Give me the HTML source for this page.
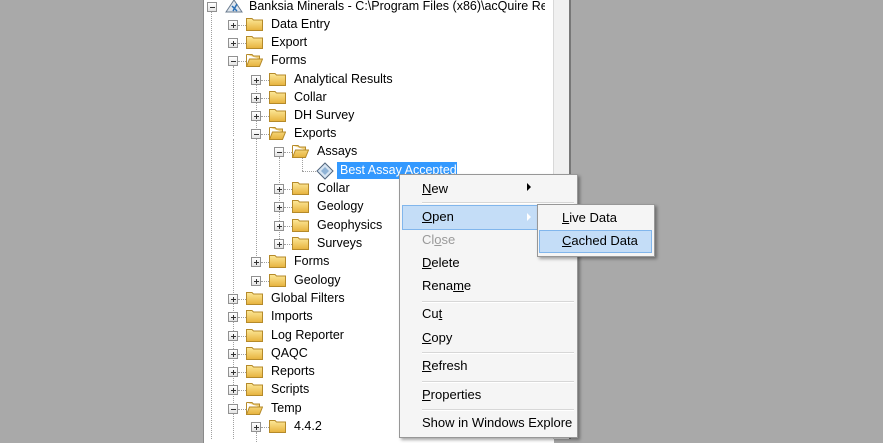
<!DOCTYPE html>
<html><head><meta charset="utf-8"><style>
body{margin:0;width:883px;height:439px;background:#a9a9a9;position:relative;overflow:hidden;font-family:"Liberation Sans",sans-serif;font-size:12.5px;color:#000}
#panel{position:absolute;left:203px;top:-2px;width:350px;height:445px;background:#fff;border-left:1px solid #8a8a8a}
#sb{position:absolute;left:553px;top:0;width:15px;height:439px;background:#f0f0f0;border-left:1px solid #d8d8d8;border-right:2px solid #777}
.v{position:absolute;border-left:1px dotted #a0a0a0;width:0}
.h{position:absolute;border-top:1px dotted #a0a0a0;height:0}
.box{position:absolute;width:8px;height:8px;border:1px solid #919191;background:linear-gradient(#fff,#e4e4e4);font-size:0}
.box:before{content:"";position:absolute;left:2px;top:4px;width:5px;height:1px;background:#333}
.box.p:after{content:"";position:absolute;left:4px;top:2px;width:1px;height:5px;background:#333}
.f{position:absolute;width:17px;height:14px;margin-top:-1px}
.t{position:absolute;white-space:nowrap;line-height:16px}
#menu{position:absolute;left:399px;top:174px;width:177px;height:262px;background:#f5f5f5;border:1px solid #979797;box-shadow:2px 2px 3px rgba(0,0,0,.35)}
.mi{position:absolute;left:22px;white-space:nowrap;font-size:13px}
.sep{position:absolute;left:22px;right:3px;height:1px;background:#d7d7d7;border-bottom:1px solid #fff}
.hl{position:absolute;background:#c4ddf7;border:1px solid #81b6ec}
#sub{position:absolute;left:537px;top:204px;width:116px;height:51px;background:#f5f5f5;border:1px solid #979797;box-shadow:2px 2px 3px rgba(0,0,0,.35)}
u{text-decoration:underline}
</style></head><body>
<div id="panel"></div>
<div id="sb"></div>
<svg width="0" height="0" style="position:absolute"><defs>
<linearGradient id="g" x1="0" y1="0" x2="0" y2="1"><stop offset="0" stop-color="#fde99a"/><stop offset="1" stop-color="#e6b23c"/></linearGradient>
<symbol id="fc" viewBox="0 0 17 14"><path d="M0.5 1.5h5.5l1.5 1.5h9v10.5h-16z" fill="url(#g)" stroke="#b58a2a"/></symbol>
<symbol id="fo" viewBox="0 0 17 14"><path d="M0.5 1.5h5.5l1.5 1.5h6v3" fill="#f3d27a" stroke="#b58a2a"/><path d="M0.5 13.5v-12M0.5 13.5l3-7.5h13l-3 7.5z" fill="url(#g)" stroke="#b58a2a"/></symbol>
</defs></svg>
<div class="v" style="left:211px;top:12px;height:427px"></div>
<div class="v" style="left:233px;top:66px;height:70px"></div>
<div class="v" style="left:233px;top:139px;height:300px"></div>
<div class="v" style="left:256px;top:84px;height:182px"></div>
<div class="v" style="left:256px;top:432px;height:10px"></div>
<div class="v" style="left:279px;top:157px;height:90px"></div>
<div class="v" style="left:302px;top:157px;height:14px"></div>
<div class="box" style="left:207px;top:2px"></div>
<svg style="position:absolute;left:224px;top:-2px" width="20" height="16"><path d="M2 14l8-12 8 12z" fill="#dfe6ee" stroke="#6b7c8f"/><path d="M8 8l5 5M13 6l-4 7" stroke="#2a6fb5" stroke-width="1.5"/></svg>
<div class="t" style="left:249px;top:-2px;width:296px;overflow:hidden">Banksia Minerals - C:\Program Files (x86)\acQuire Refe</div>

<div class="h" style="left:238px;top:25px;width:8px"></div><div class="box p" style="left:228px;top:20px"></div><svg class="f" style="left:246px;top:18px"><use href="#fc"/></svg><div class="t" style="left:271px;top:16px">Data Entry</div>
<div class="h" style="left:238px;top:43px;width:8px"></div><div class="box p" style="left:228px;top:38px"></div><svg class="f" style="left:246px;top:36px"><use href="#fc"/></svg><div class="t" style="left:271px;top:34px">Export</div>
<div class="h" style="left:238px;top:61px;width:8px"></div><div class="box" style="left:228px;top:56px"></div><svg class="f" style="left:246px;top:54px"><use href="#fo"/></svg><div class="t" style="left:271px;top:52px">Forms</div>
<div class="h" style="left:261px;top:80px;width:8px"></div><div class="box p" style="left:251px;top:75px"></div><svg class="f" style="left:269px;top:73px"><use href="#fc"/></svg><div class="t" style="left:294px;top:71px">Analytical Results</div>
<div class="h" style="left:261px;top:98px;width:8px"></div><div class="box p" style="left:251px;top:93px"></div><svg class="f" style="left:269px;top:91px"><use href="#fc"/></svg><div class="t" style="left:294px;top:89px">Collar</div>
<div class="h" style="left:261px;top:116px;width:8px"></div><div class="box p" style="left:251px;top:111px"></div><svg class="f" style="left:269px;top:109px"><use href="#fc"/></svg><div class="t" style="left:294px;top:107px">DH Survey</div>
<div class="h" style="left:261px;top:134px;width:8px"></div><div class="box" style="left:251px;top:129px"></div><svg class="f" style="left:269px;top:127px"><use href="#fo"/></svg><div class="t" style="left:294px;top:125px">Exports</div>
<div class="h" style="left:284px;top:152px;width:8px"></div><div class="box" style="left:274px;top:147px"></div><svg class="f" style="left:292px;top:145px"><use href="#fo"/></svg><div class="t" style="left:317px;top:143px">Assays</div>
<div class="h" style="left:302px;top:171px;width:14px"></div>
<svg style="position:absolute;left:316px;top:162px" width="18" height="18"><path d="M9 1l8 8-8 8-8-8z" fill="#d6e4f2" stroke="#52667d"/><path d="M5 9l4-4 4 4-4 4z" fill="#8fb3d6"/></svg>
<div style="position:absolute;left:337px;top:162px;width:120px;height:17px;background:#3399ff"></div>
<div class="t" style="left:340px;top:162px;color:#fff">Best Assay Accepted</div>
<div class="h" style="left:284px;top:189px;width:8px"></div><div class="box p" style="left:274px;top:184px"></div><svg class="f" style="left:292px;top:182px"><use href="#fc"/></svg><div class="t" style="left:317px;top:180px">Collar</div>
<div class="h" style="left:284px;top:207px;width:8px"></div><div class="box p" style="left:274px;top:202px"></div><svg class="f" style="left:292px;top:200px"><use href="#fc"/></svg><div class="t" style="left:317px;top:198px">Geology</div>
<div class="h" style="left:284px;top:226px;width:8px"></div><div class="box p" style="left:274px;top:221px"></div><svg class="f" style="left:292px;top:219px"><use href="#fc"/></svg><div class="t" style="left:317px;top:217px">Geophysics</div>
<div class="h" style="left:284px;top:244px;width:8px"></div><div class="box p" style="left:274px;top:239px"></div><svg class="f" style="left:292px;top:237px"><use href="#fc"/></svg><div class="t" style="left:317px;top:235px">Surveys</div>
<div class="h" style="left:261px;top:262px;width:8px"></div><div class="box p" style="left:251px;top:257px"></div><svg class="f" style="left:269px;top:255px"><use href="#fc"/></svg><div class="t" style="left:294px;top:253px">Forms</div>
<div class="h" style="left:261px;top:281px;width:8px"></div><div class="box p" style="left:251px;top:276px"></div><svg class="f" style="left:269px;top:274px"><use href="#fc"/></svg><div class="t" style="left:294px;top:272px">Geology</div>
<div class="h" style="left:238px;top:299px;width:8px"></div><div class="box p" style="left:228px;top:294px"></div><svg class="f" style="left:246px;top:292px"><use href="#fc"/></svg><div class="t" style="left:271px;top:290px">Global Filters</div>
<div class="h" style="left:238px;top:317px;width:8px"></div><div class="box p" style="left:228px;top:312px"></div><svg class="f" style="left:246px;top:310px"><use href="#fc"/></svg><div class="t" style="left:271px;top:308px">Imports</div>
<div class="h" style="left:238px;top:336px;width:8px"></div><div class="box p" style="left:228px;top:331px"></div><svg class="f" style="left:246px;top:329px"><use href="#fc"/></svg><div class="t" style="left:271px;top:327px">Log Reporter</div>
<div class="h" style="left:238px;top:354px;width:8px"></div><div class="box p" style="left:228px;top:349px"></div><svg class="f" style="left:246px;top:347px"><use href="#fc"/></svg><div class="t" style="left:271px;top:345px">QAQC</div>
<div class="h" style="left:238px;top:372px;width:8px"></div><div class="box p" style="left:228px;top:367px"></div><svg class="f" style="left:246px;top:365px"><use href="#fc"/></svg><div class="t" style="left:271px;top:363px">Reports</div>
<div class="h" style="left:238px;top:390px;width:8px"></div><div class="box p" style="left:228px;top:385px"></div><svg class="f" style="left:246px;top:383px"><use href="#fc"/></svg><div class="t" style="left:271px;top:381px">Scripts</div>
<div class="h" style="left:238px;top:409px;width:8px"></div><div class="box" style="left:228px;top:404px"></div><svg class="f" style="left:246px;top:402px"><use href="#fo"/></svg><div class="t" style="left:271px;top:400px">Temp</div>
<div class="h" style="left:261px;top:427px;width:8px"></div><div class="box p" style="left:251px;top:422px"></div><svg class="f" style="left:269px;top:420px"><use href="#fc"/></svg><div class="t" style="left:294px;top:418px">4.4.2</div>

<div id="menu">
 <div class="hl" style="left:2px;top:30px;width:137px;height:23px"></div>
 <div class="mi" style="top:6px"><u>N</u>ew</div>
 <div style="position:absolute;left:127px;top:8px;width:0;height:0;border-left:4px solid #000;border-top:4px solid transparent;border-bottom:4px solid transparent"></div>
 <div class="sep" style="top:27px"></div>
 <div class="mi" style="top:34px"><u>O</u>pen</div>
 <div style="position:absolute;left:127px;top:38px;width:0;height:0;border-left:4px solid #fff;border-top:4px solid transparent;border-bottom:4px solid transparent"></div>
 <div class="mi" style="top:57px;color:#9a9a9a">Cl<u>o</u>se</div>
 <div class="mi" style="top:80px"><u>D</u>elete</div>
 <div class="mi" style="top:103px">Rena<u>m</u>e</div>
 <div class="sep" style="top:126px"></div>
 <div class="mi" style="top:131px">Cu<u>t</u></div>
 <div class="mi" style="top:155px"><u>C</u>opy</div>
 <div class="sep" style="top:177px"></div>
 <div class="mi" style="top:183px"><u>R</u>efresh</div>
 <div class="sep" style="top:206px"></div>
 <div class="mi" style="top:212px"><u>P</u>roperties</div>
 <div class="sep" style="top:234px"></div>
 <div class="mi" style="top:240px;width:151px;overflow:hidden">Show in Windows Explorer</div>
</div>
<div id="sub">
 <div class="hl" style="left:1px;top:25px;width:111px;height:21px"></div>
 <div class="mi" style="left:24px;top:5px"><u>L</u>ive Data</div>
 <div class="mi" style="left:24px;top:28px"><u>C</u>ached Data</div>
</div>
</body></html>
